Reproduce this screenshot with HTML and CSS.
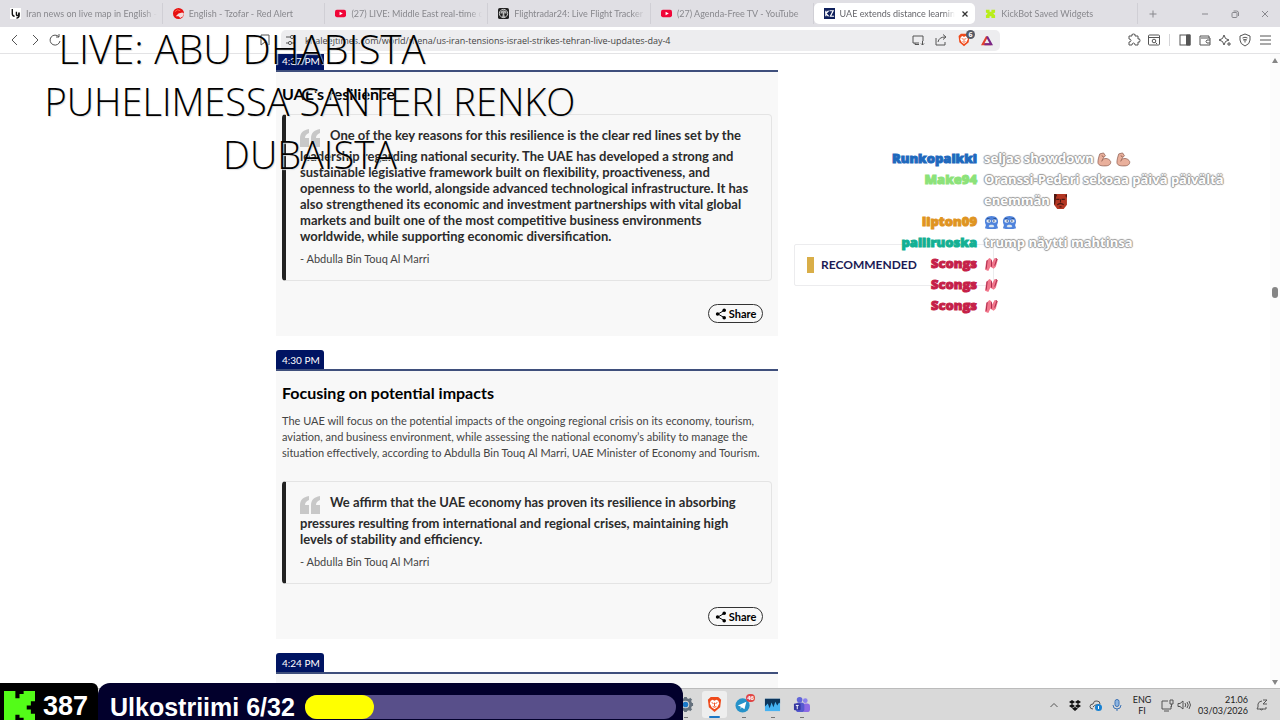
FILE: index.html
```html
<!DOCTYPE html>
<html lang="en">
<head>
<meta charset="utf-8">
<meta name="viewport" content="width=device-width, initial-scale=1">
<title>UAE extends distance learning</title>
<link rel="stylesheet" href="styles.css">
</head>
<body>
<svg class="defs" aria-hidden="true">
  <symbol id="quote" viewBox="0 0 20 18"><path d="M9 0v4C6 5 5 7 5 9h4v9H0V9C0 4 3 1 9 0zM20 0v4c-3 1-4 3-4 5h4v9h-9V9c0-5 3-8 9-9z"/></symbol>
  <symbol id="share" viewBox="0 0 12 12"><path d="M9 2.500L3 6l6 3.500" fill="none" stroke="currentColor" stroke-width="1"/><circle cx="9.200" cy="2.300" r="1.800"/><circle cx="2.600" cy="6" r="1.800"/><circle cx="9.200" cy="9.700" r="1.800"/></symbol>
  <symbol id="youtube" viewBox="0 0 12 12"><rect y="2" width="12" height="8" rx="2" fill="#f00638"/><path d="M5 4l3.500 2L5 8z" fill="#fff"/></symbol>
  <symbol id="arm" viewBox="0 0 16 16"><path d="M3 2l4-1 2 3-2 2-1 2c3-2 7-1 8.500 2 .8 3-2 5-6 4.800C4 15 1 14 1 11 1 8 2 5 3 2z" fill="#e9b09c" stroke="#8f5d50" stroke-width=".8"/><path d="M5 4l2 1M6 8l-1 2" stroke="#8f5d50" fill="none"/></symbol>
  <symbol id="face" viewBox="0 0 16 16"><path d="M8 1c5 0 7 3 7 6 0 2-1 3-1 4l1 3-3 1H4l-3-1 1-3c0-1-1-2-1-4 0-3 2-6 7-6z" fill="#4f83dc"/><ellipse cx="5" cy="6.500" rx="2.500" ry="1.800" fill="#e7edf2"/><ellipse cx="11" cy="6.500" rx="2.500" ry="1.800" fill="#e7edf2"/><circle cx="5.500" cy="6.500" r=".8" fill="#173667"/><circle cx="10.500" cy="6.500" r=".8" fill="#173667"/><path d="M3 3.500l3 .5M13 3.500l-3 .5" stroke="#173667" stroke-width=".7"/><path d="M5 12c1-2 5-2 6 0l-1 1H6z" fill="#dce8ef"/></symbol>
  <symbol id="gloves" viewBox="0 0 14 14"><path d="M2 4l3-3 2 1v4l3-5 3 1-2 7-2 2-3-2-2 4-3-1z" fill="#f2778c"/><path d="M3 3L2 11M7 3v6M11 1l1 1-2 6" stroke="#a92a4c" stroke-width=".9" fill="none"/></symbol>
  <symbol id="brave" viewBox="0 0 16 18"><path d="M4 1h8l3 3-1 8-6 5-6-5L1 4z" fill="#ef4a1b"/><path d="M4 5l2-1 2 1 2-1 2 1 1 3-2 4-3 2-3-2-2-4z" fill="#fff"/><path d="M5 7l2 1M11 7L9 8M8 7v4M6 11l2 1 2-1" stroke="#ef4a1b" fill="none"/></symbol>
</svg>

<div class="browser">
  <header class="tabs">
    <nav class="tab-list" aria-label="Open tabs">
      <button class="tab"><svg viewBox="0 0 12 12"><path d="M0 0h12v12H0z" fill="#fff"/><path d="M2.500 1v5q0 3 2.500 3M7 4v3q0 2 2 1l1-3v3q0 3-3 3" fill="none" stroke="#111" stroke-width="1.500"/></svg><span>Iran news on live map in English - Conflict</span></button>
      <button class="tab"><svg viewBox="0 0 12 12"><circle cx="6" cy="6" r="6" fill="#e71010"/><path d="M6 6l4-1 2 1-1 3-3 2-2-2H3z" fill="#f6dada"/><path d="M2 4l3-2 3 1" stroke="#ff6b50" fill="none"/></svg><span>English - Tzofar - Red Alert</span></button>
      <button class="tab"><svg><use href="#youtube"/></svg><span>(27) LIVE: Middle East real-time cameras</span></button>
      <button class="tab"><svg viewBox="0 0 12 12"><rect width="12" height="12" rx="2" fill="#222"/><circle cx="6" cy="6" r="4.500" fill="none" stroke="#ddd"/><path d="M3 6a3 3 0 0 1 6 0M5 10l1-5 1 5z" fill="#999" stroke="#ddd" stroke-width=".7"/></svg><span>Flightradar24: Live Flight Tracker - Real</span></button>
      <button class="tab"><svg><use href="#youtube"/></svg><span>(27) Agenda-Free TV - YouTube</span></button>
      <button class="tab active"><svg viewBox="0 0 12 12"><path d="M0 0h12v12H0z" fill="#10215c"/><path d="M2 3v6M5 3L2 6l3 3M6 3h4L7 9h4" stroke="#fff" fill="none" stroke-width="1.300"/></svg><span>UAE extends distance learning for</span><svg class="close" viewBox="0 0 8 8"><path d="M2 2l4 4M6 2L2 6" stroke="#333" fill="none"/></svg></button>
      <button class="tab"><svg viewBox="0 0 12 12"><path d="M1 2h4v2h2V2h4v3L9 6l2 2v3H7V9H5v2H1V8l2-2-2-1z" fill="#b9ee1b"/></svg><span>KickBot Saved Widgets</span></button>
    </nav>
    <button class="icon" aria-label="New tab"><svg viewBox="0 0 12 12"><path d="M6 2.500v7M2.500 6h7"/></svg></button>
    <div class="window-controls">
      <button class="icon" aria-label="Minimize"><svg viewBox="0 0 12 12"><path d="M3 6h6"/></svg></button>
      <button class="icon" aria-label="Restore"><svg viewBox="0 0 12 12"><rect x="3" y="4.500" width="5" height="5" rx="1"/><path d="M4.500 3h3Q9.500 3 9.500 5v3"/></svg></button>
      <button class="icon" aria-label="Close"><svg viewBox="0 0 12 12"><path d="M3 3l6 6M9 3L3 9"/></svg></button>
    </div>
  </header>

  <div class="toolbar">
    <div class="nav-buttons">
      <button class="icon" aria-label="Back"><svg viewBox="0 0 14 14"><path d="M9 2L4 7l5 5"/></svg></button>
      <button class="icon" aria-label="Forward"><svg viewBox="0 0 14 14"><path d="M5 2l5 5-5 5"/></svg></button>
      <button class="icon" aria-label="Reload"><svg viewBox="0 0 14 14"><path d="M11 4a5 5 0 1 0 1 4M11 1v3H8"/></svg></button>
    </div>
    <button class="icon" aria-label="Bookmark"><svg viewBox="0 0 14 14"><path d="M3 2h8v10L7 9l-4 3z"/></svg></button>
    <div class="address">
      <svg viewBox="0 0 14 14"><path d="M2 4h4M10 4h2M2 10h2M8 10h4"/><circle cx="8" cy="4" r="1.600"/><circle cx="6" cy="10" r="1.600"/></svg>
      <input aria-label="Address" value="khaleejtimes.com/world/mena/us-iran-tensions-israel-strikes-tehran-live-updates-day-4">
      <button class="icon" aria-label="Install app"><svg viewBox="0 0 14 14"><path d="M8 10H2V3h10v5M4 10v1.500h4M11.500 8v4M10 10.500l1.500 1.500 1.500-1.500"/></svg></button>
      <button class="icon" aria-label="Share page"><svg viewBox="0 0 14 14"><path d="M2 5v7h9V9M4 9q1-5 7-5M9 1.500L12 4 9 6.500"/></svg></button>
      <button class="icon shield" aria-label="Brave Shields"><svg viewBox="0 0 16 18"><use href="#brave"/></svg><b>6</b></button>
      <button class="icon rewards" aria-label="Rewards"><svg viewBox="0 0 14 14"><path d="M7 3L2 12h10" stroke="#e2412c" stroke-width="2.500"/><path d="M7 3l5 9H4" stroke="#7a2787" stroke-width="2.500"/></svg></button>
    </div>
    <div class="extensions">
      <button class="icon" aria-label="Extensions"><svg viewBox="0 0 14 14"><path d="M2 3h3q-1-2 1.500-2T8 3h3v3q2-1 2 1.500T11 9v3H8q0-2-1.500-2T5 12H2V9q2 0 2-1.500T2 6z"/></svg></button>
      <button class="icon" aria-label="Search in page"><svg viewBox="0 0 14 14"><rect x="1.500" y="2" width="11" height="10" rx="1"/><path d="M2 4.500h10M8.500 9.500L10 11"/><circle cx="7" cy="8" r="1.800"/></svg></button>
      <span class="divider"></span>
      <button class="icon" aria-label="Sidebar"><svg viewBox="0 0 14 14"><rect x="2" y="2" width="10" height="10"/><path d="M8.500 2H12v10H8.500z" fill="#555"/></svg></button>
      <button class="icon" aria-label="Wallet"><svg viewBox="0 0 14 14"><path d="M2 3h9v2M2 3v9h10V5H3M12 7H9q-2 1.500 0 3h3"/></svg></button>
      <button class="icon" aria-label="Leo"><svg viewBox="0 0 14 14"><path d="M6 2l1.500 3.500L11 7 7.500 8.500 6 12 4.500 8.500 1 7l3.500-1.500zM11 9v4M9 11h4"/></svg></button>
      <button class="icon" aria-label="VPN"><svg viewBox="0 0 14 14"><path d="M7 1l5 2v4q0 4-5 6-5-2-5-6V3z"/><path d="M4.500 5q2.500-1.500 5 0M5 7q2-1 4 0M7 7v2.500"/></svg></button>
      <button class="icon" aria-label="Menu"><svg viewBox="0 0 14 14"><path d="M2 3h11M2 7h11M2 11h11"/></svg></button>
    </div>
  </div>

  <div class="viewport">
    <div class="page">
      <main class="feed">
        <article class="post">
          <time class="time">4:37 PM</time>
          <div class="post-body">
            <h2>UAE's resilience</h2>
            <blockquote>
              <p><svg class="quote"><use href="#quote"/></svg>One of the key reasons for this resilience is the clear red lines set by the<br>leadership regarding national security. The UAE has developed a strong and<br>sustainable legislative framework built on flexibility, proactiveness, and<br>openness to the world, alongside advanced technological infrastructure. It has<br>also strengthened its economic and investment partnerships with vital global<br>markets and built one of the most competitive business environments<br>worldwide, while supporting economic diversification.</p>
              <cite>- Abdulla Bin Touq Al Marri</cite>
            </blockquote>
            <button class="share"><svg><use href="#share"/></svg>Share</button>
          </div>
        </article>
        <article class="post">
          <time class="time">4:30 PM</time>
          <div class="post-body">
            <h2>Focusing on potential impacts</h2>
            <p class="summary">The UAE will focus on the potential impacts of the ongoing regional crisis on its economy, tourism,<br>aviation, and business environment, while assessing the national economy’s ability to manage the<br>situation effectively, according to Abdulla Bin Touq Al Marri, UAE Minister of Economy and Tourism.</p>
            <blockquote>
              <p><svg class="quote"><use href="#quote"/></svg>We affirm that the UAE economy has proven its resilience in absorbing<br>pressures resulting from international and regional crises, maintaining high<br>levels of stability and efficiency.</p>
              <cite>- Abdulla Bin Touq Al Marri</cite>
            </blockquote>
            <button class="share"><svg><use href="#share"/></svg>Share</button>
          </div>
        </article>
        <article class="post">
          <time class="time">4:24 PM</time>
          <div class="post-body"></div>
        </article>
      </main>
      <aside class="recommended"><h3>RECOMMENDED</h3></aside>
    </div>
    <div class="scrollbar"><i class="up"></i><i class="thumb"></i><i class="down"></i></div>
  </div>

  <footer class="taskbar">
    <div class="apps">
      <button class="app" aria-label="Settings"><svg viewBox="0 0 18 18"><circle cx="9" cy="9" r="5.500" fill="none" stroke="#64707c" stroke-width="3"/><path d="M9 1v3M9 14v3M1 9h3M14 9h3M3 3l2 2M13 13l2 2M15 3l-2 2M5 13l-2 2" stroke="#64707c" stroke-width="3"/><circle cx="9" cy="9" r="3" fill="#1b78c8"/></svg></button>
      <button class="app current" aria-label="Brave"><svg viewBox="0 0 16 18"><use href="#brave"/></svg></button>
      <button class="app" aria-label="Telegram"><svg viewBox="0 0 18 18"><circle cx="8" cy="10" r="7.500" fill="#2692c9"/><path d="M3 10l9-4-2 8-3-2-1 2v-3z" fill="#fff"/></svg><b>46</b></button>
      <button class="app" aria-label="Monitor"><svg viewBox="0 0 18 18"><path d="M1 3h16v13H1z" fill="#45b2f2"/><path d="M1 3h16v5l-1-1-2 3-2-4-2 6-2-5-2 6-2-5-3 3z" fill="#0c365d"/></svg></button>
      <button class="app" aria-label="Teams"><svg viewBox="0 0 18 18"><circle cx="7" cy="4" r="3" fill="#6266d9"/><circle cx="13" cy="5" r="2.500" fill="#8c82ed"/><rect x="10" y="8" width="8" height="9" rx="3" fill="#8d6be5"/><rect x="3" y="7" width="9" height="10" rx="3" fill="#5659cf"/><rect x="1" y="8" width="7" height="7" rx="1" fill="#3436a0"/><path d="M3 10h3M4.500 10v4" stroke="#fff"/></svg></button>
    </div>
    <div class="tray">
      <svg viewBox="0 0 14 14"><path d="M3.500 9L7 5.500 10.500 9"/></svg>
      <svg viewBox="0 0 14 14"><path d="M4 2l3 2-3 2-3-2zM10 2l3 2-3 2-3-2zM4 6l3 2-3 2-3-2zM10 6l3 2-3 2-3-2zM7 9l3 1.500L7 13l-3-2.500z" fill="#111" stroke="none"/></svg>
      <svg viewBox="0 0 14 14"><path d="M4 11Q1 11 1 8.500T4 6q1-4 4-3 3 0 3 3M4 9q3-4 8-1"/><circle cx="9.500" cy="9.500" r="3.500" fill="#1781d2" stroke="none"/><path d="M9.500 8v3" stroke="#fff"/></svg>
      <svg viewBox="0 0 14 14"><rect x="5" y="1.500" width="4" height="7" rx="2" fill="#8db5e2" stroke="#3c72b4"/><path d="M3 7q0 4 4 4t4-4M7 11v2" stroke="#3c72b4"/></svg>
      <span class="lang">ENG<br>FI</span>
      <div class="pair"><svg viewBox="0 0 14 14"><path d="M8 3H2v8h9V8M4 13h5M10 2h3v4h-3zM11.500 6v3"/></svg>
      <svg viewBox="0 0 14 14"><path d="M1 5.500h2L6 3v8L3 8.500H1zM8 5q1.500 2 0 4M10 4q2.500 3 0 6M12 3q3 4 0 8"/></svg></div>
      <time class="clock">21.06<br>03/03/2026</time>
      <svg viewBox="0 0 14 14"><path d="M11 9v2H2l1-2V6q1-3 4-3M5 11q1 2 3 0M8 2h4L8 6h4"/></svg>
    </div>
  </footer>

  <h1 class="headline"><span class="first">LIVE: ABU DHABISTA</span><span>PUHELIMESSA SANTERI RENKO</span><span>DUBAISTA</span></h1>

  <section class="chat" aria-label="Chat">
    <b class="blue">Runkopalkki</b><p>seljas showdown <svg><use href="#arm"/></svg> <svg><use href="#arm"/></svg></p>
    <b class="green">Make94</b><p>Oranssi-Pedari sekoaa päivä päivältä<br>enemmän <svg viewBox="0 0 14 14"><path d="M1 0h12v10l-3 4H4l-3-4z" fill="#b33622"/><path d="M1 0h2l1 2h7l2-2v4l-1-2H3L2 9 1 10z" fill="#4a1712"/><path d="M3 5h3M8 5h3M4 10q3-2 6 0M7 5v3M6 12h2" fill="none" stroke="#4a1712"/></svg></p>
    <b class="orange">lipton09</b><p><svg><use href="#face"/></svg> <svg><use href="#face"/></svg></p>
    <b class="teal">palliruoska</b><p>trump näytti mahtinsa</p>
    <b class="red">Scongs</b><p><svg><use href="#gloves"/></svg></p>
    <b class="red">Scongs</b><p><svg><use href="#gloves"/></svg></p>
    <b class="red">Scongs</b><p><svg><use href="#gloves"/></svg></p>
  </section>

  <section class="stream-bar" aria-label="Stream goal">
    <div class="viewers"><svg viewBox="0 0 30 30"><path d="M0 0h11v7h4V3h4V0h11v10h-4v4h-4v4h4v4h4v8H19v-4h-4v-3h-4v7H0z" fill="#53fc18"/></svg>387</div>
    <div class="goal"><span>Ulkostriimi 6/32</span><div class="meter"><div class="fill" style="width:18.75%"></div></div></div>
  </section>
</div>
</body>
</html>
```
FILE: styles.css
```css
* { box-sizing: border-box; }
body { margin: 0; font-family: "Open Sans", sans-serif; color: #111; background: #fff; }
button { border: 0; padding: 0; background: none; color: inherit; font: inherit; }
h1, h2, h3, p, blockquote { margin: 0; }
svg { flex: none; }
.defs { position: absolute; width: 0; height: 0; }
.browser { position: relative; display: flex; flex-direction: column; height: 100vh; overflow: hidden; }

.tabs { display: flex; align-items: center; height: 27px; flex: none; background: #e0dfe4; }
.tab-list { display: flex; flex: 0 1 1138px; min-width: 0; }
.tab { display: flex; align-items: center; gap: 5px; flex: 1 1 0; min-width: 0; height: 21px; padding: 0 5px 0 10px; border-right: 1px solid #d0cfd5; font-family: Lato, sans-serif; font-size: 9px; color: #88888d; text-align: left; }
.tab svg { width: 11px; height: 11px; }
.tab span { flex: 1; overflow: hidden; white-space: nowrap; -webkit-mask-image: linear-gradient(90deg, #000 90%, transparent); mask-image: linear-gradient(90deg, #000 90%, transparent); }
.tab.active { background: #fff; border: 0; border-radius: 5px; color: #66666b; }
.tab .close { width: 10px; height: 10px; }
.icon { display: grid; place-items: center; position: relative; width: 20px; height: 20px; flex: none; }
.icon svg, .address > svg, .tray svg { width: 14px; height: 14px; fill: none; stroke: #555; stroke-width: 1; }
.tabs .icon { width: 30px; }
.tabs .icon svg { width: 12px; height: 12px; stroke: #88888d; }
.window-controls { display: flex; margin-left: auto; }

.toolbar { display: flex; align-items: center; height: 27px; flex: none; padding: 0 5px; border-bottom: 1px solid #e3e3e5; background: #fff; }
.nav-buttons { display: flex; flex: 0 1 250px; }
.address { display: flex; align-items: center; flex: 0 1 719px; min-width: 0; height: 21px; padding: 0 2px 0 3px; border-radius: 5px; background: #ededef; margin-left: 6px; }
.address input { flex: 1; min-width: 0; padding: 0 0 0 7px; border: 0; background: none; font: 9px "Open Sans", sans-serif; color: #444; }
.address .icon { width: 23px; }
.address .shield svg { stroke: none; }
.address .rewards svg { width: 12px; height: 12px; }
.shield b { position: absolute; top: 0; right: 0; width: 9px; height: 9px; border-radius: 50%; background: #555a66; color: #fff; font-size: 7px; line-height: 9px; }
.extensions { display: flex; align-items: center; margin-left: auto; }
.divider { width: 1px; height: 12px; margin: 0 5px; background: #d5d5d8; }

.viewport { display: flex; flex: 1; min-height: 0; }
.page { display: flex; justify-content: center; align-items: flex-start; gap: 16px; flex: 1; height: 100%; overflow: hidden; font-family: Lato, sans-serif; }
.feed { width: 502px; margin-top: -3px; }
.post { margin-bottom: 14px; }
.time { display: block; width: fit-content; height: 19px; padding: 0 4px 0 6px; border-radius: 3px 3px 0 0; background: #001462; color: #fff; font-size: 10px; line-height: 20px; }
.post-body { display: flex; flex-direction: column; min-height: 40px; padding: 12px 6px 13px; border-top: 2px solid #3f4f7c; background: #f8f8f8; }
h2 { margin-bottom: 10px; font-size: 16px; line-height: 20px; font-weight: 700; color: #000; white-space: nowrap; }
.summary { margin: 0 0 20px; font-size: 11px; line-height: 16px; color: #444; white-space: nowrap; }
blockquote { padding: 11px 14px 13px; border: 1px solid #e4e4e4; border-left: 4px solid #222; border-radius: 4px; white-space: nowrap; color: #2b2b2b; }
blockquote p { font-size: 13px; line-height: 16px; font-weight: 700; }
.quote { width: 20px; height: 18px; margin: 3px 10px 1px 0; vertical-align: middle; fill: #c8c8c8; }
cite { display: block; margin-top: 7px; font-size: 11px; line-height: 16px; font-style: normal; color: #444; }
.share { display: flex; align-items: center; justify-content: center; gap: 2px; align-self: flex-end; width: 55px; height: 19px; margin: 23px 9px 0 0; border: 1px solid #333; border-radius: 10px; font-size: 11px; font-weight: 700; color: #000; }
.share svg { width: 12px; height: 12px; }
.recommended { width: 200px; margin-top: 190px; padding: 12px; border: 1px solid #ececee; border-radius: 2px; }
.recommended h3 { padding-left: 7px; border-left: 7px solid #d9ae48; font-size: 12px; line-height: 16px; font-weight: 700; color: #1c1b55; }
.scrollbar { position: relative; width: 10px; background: #fcfcfc; }
.scrollbar i { position: absolute; left: 2px; border: 3px solid transparent; }
.scrollbar .up { top: 1px; border-bottom: 5px solid #858585; }
.scrollbar .down { bottom: 0; border-top: 5px solid #858585; }
.scrollbar .thumb { top: 233px; width: 6px; height: 11px; border: 0; border-radius: 3px; background: #858585; }

.taskbar { display: flex; align-items: center; justify-content: space-between; height: 32px; flex: none; padding: 0 11px 0 673px; border-top: 1px solid #bbb; background: #d9d9d9; }
.apps { display: flex; gap: 4px; }
.app { position: relative; display: grid; place-items: center; width: 25px; height: 27px; border-radius: 3px; }
.app svg { width: 17px; height: 17px; }
.app.current { background: #eee; }
.app b { position: absolute; top: 3px; right: 1px; padding: 0 1px; border-radius: 4px; background: #df4545; color: #fff; font-size: 6px; line-height: 8px; }
.app::after { content: ""; position: absolute; bottom: 0; width: 4px; height: 1px; background: #777; }
.app.current::after { width: 11px; height: 2px; border-radius: 1px; background: #1976c5; }
.tray { display: flex; align-items: center; gap: 7px; font-family: Lato, sans-serif; font-size: 9px; line-height: 11px; color: #222; }
.lang { width: 22px; text-align: center; }
.pair { display: flex; gap: 3px; }
.clock { min-width: 44px; text-align: right; }

.headline { position: absolute; top: 22px; left: 30px; width: 560px; display: flex; flex-direction: column; align-items: center; font-family: "Open Sans", sans-serif; font-weight: 300; font-size: 38px; line-height: 53px; color: #000; white-space: nowrap; text-shadow: 1px 1px 1px #ddd; }
.headline .first { padding-right: 136px; font-size: 40px; }
.chat { position: absolute; top: 148px; left: 870px; display: grid; grid-template-columns: 107px max-content; column-gap: 7px; font-size: 13px; line-height: 21px; font-weight: 800; }
.chat b { text-align: right; font-weight: 800; -webkit-text-stroke: 1px currentColor; }
.chat p { color: #fff; font-weight: 700; text-shadow: 1px 0 1px #999, -1px 0 1px #999, 0 1px 1px #999, 0 -1px 1px #999; }
.chat svg { width: 15px; height: 15px; vertical-align: middle; }
.blue { color: #1e69bd; }
.green { color: #8ce279; }
.orange { color: #df9421; }
.teal { color: #13b093; }
.red { color: #c51f48; }
.stream-bar { position: absolute; left: 0; bottom: 0; display: flex; width: 683px; height: 37px; font-family: "Liberation Sans", Arial, sans-serif; font-weight: 700; color: #fff; }
.viewers { display: flex; align-items: center; gap: 8px; width: 98px; padding: 9px 0 0 4px; border-radius: 0 6px 0 0; background: #000; font-size: 27px; line-height: 28px; }
.viewers svg { width: 31px; height: 31px; }
.goal { display: flex; align-items: center; gap: 10px; flex: 1; padding: 11px 7px 0 12px; border-radius: 12px 12px 0 0; background: #02002c; font-size: 25px; line-height: 28px; white-space: nowrap; }
.meter { flex: 1; height: 24px; border-radius: 12px; background: #584f8a; }
.fill { height: 100%; border-radius: 12px; background: #ff0; }
```
